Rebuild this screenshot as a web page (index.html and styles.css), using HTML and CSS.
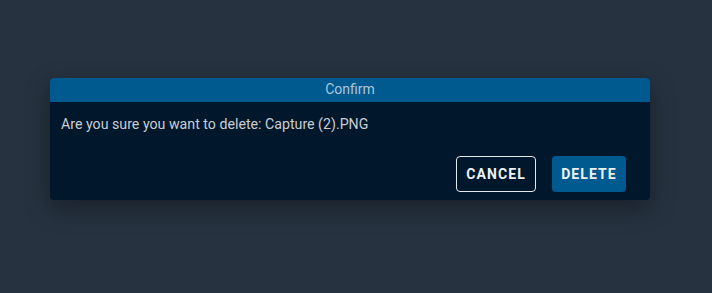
FILE: index.html
```html
<!DOCTYPE html>
<html>
<head>
<meta charset="utf-8">
<link rel="stylesheet" href="styles.css">
</head>
<body>
<div class="overlay">
  <div class="dialog">
    <div class="dialog-header">Confirm</div>
    <div class="dialog-body">Are you sure you want to delete: Capture (2).PNG</div>
    <div class="dialog-actions">
      <button class="btn btn-outline">CANCEL</button>
      <button class="btn btn-primary">DELETE</button>
    </div>
  </div>
</div>
</body>
</html>
```

FILE: styles.css
```css
html, body {
  margin: 0;
  padding: 0;
  height: 100%;
}
body {
  background: #263240;
  font-family: Roboto, "Liberation Sans", sans-serif;
}
.overlay {
  padding: 78px 0 0 50px;
  display: flex;
}
.dialog {
  width: 600px;
  background: #00172c;
  border-radius: 4px;
  overflow: hidden;
  box-shadow: 0 8px 24px rgba(0, 0, 0, 0.35);
}
.dialog-header {
  height: 24px;
  line-height: 23px;
  background: #005a8f;
  color: #aec6db;
  text-align: center;
  font-size: 14px;
}
.dialog-body {
  padding: 13px 11px 0;
  height: 19px;
  line-height: 19px;
  font-size: 14.2px;
  color: #c9ced4;
}
.dialog-actions {
  display: flex;
  justify-content: flex-end;
  gap: 16px;
  padding: 22px 24px 8px;
}
.btn {
  height: 36px;
  font-family: Roboto, "Liberation Sans", sans-serif;
  font-weight: 700;
  font-size: 14px;
  letter-spacing: 1.1px;
  color: #eef1f4;
  border-radius: 4px;
  cursor: pointer;
}
.btn-outline {
  width: 80px;
  background: transparent;
  border: 1px solid #e6e9ec;
}
.btn-primary {
  width: 74px;
  background: #005a8f;
  border: none;
}
```
